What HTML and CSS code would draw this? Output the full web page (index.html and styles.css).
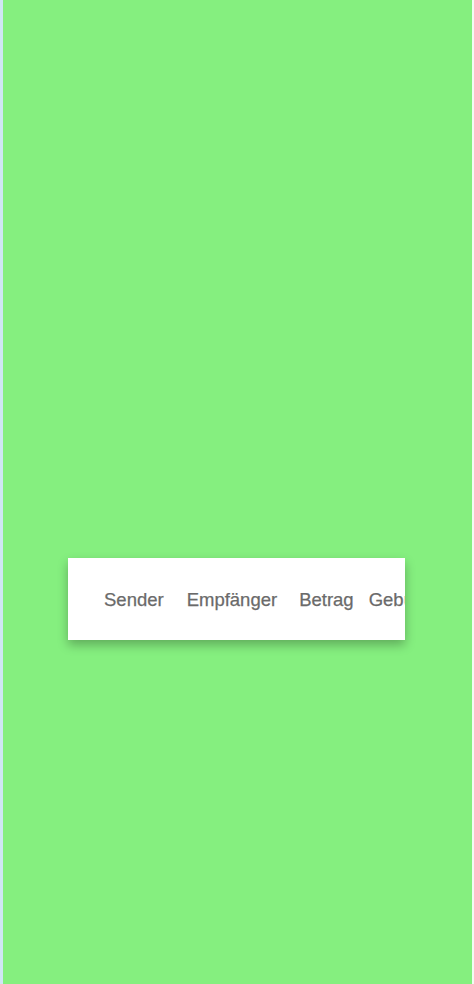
FILE: index.html
```html
<!DOCTYPE html>
<html lang="de">
<head>
<meta charset="utf-8">
<link rel="stylesheet" href="styles.css">
</head>
<body>
<div class="page">
  <div class="card">
    <div class="head">
      <span class="col">Sender</span>
      <span class="col">Empfänger</span>
      <span class="col">Betrag</span>
      <span class="col last">Gebühr</span>
    </div>
  </div>
</div>
</body>
</html>
```
FILE: styles.css
```css
html, body {
  margin: 0;
  padding: 0;
  background: #ffffff;
}
.page {
  box-sizing: border-box;
  width: 474px;
  height: 984px;
  background: #85ef7f;
  border-left: 3px solid #cfe6f4;
  border-right: 2px solid #f2fbf2;
  padding-top: 558px;
  padding-left: 65px;
  overflow: hidden;
}
.card {
  width: 337px;
  height: 82px;
  background: #ffffff;
  box-shadow: 0 5px 10px rgba(0, 0, 0, 0.28);
  overflow: hidden;
  display: flex;
  align-items: center;
}
.head {
  display: flex;
  white-space: nowrap;
  padding-left: 36px;
  padding-top: 2px;
  font-family: "Liberation Sans", Arial, sans-serif;
  font-size: 18.5px;
  color: #6a6a6a;
  -webkit-text-stroke: 0.25px #6a6a6a;
}
.col {
  margin-right: 23px;
}
.col:nth-child(2) {
  margin-right: 22px;
}
.col:nth-child(3) {
  margin-right: 15px;
}
.last {
  margin-right: 0;
}
```
